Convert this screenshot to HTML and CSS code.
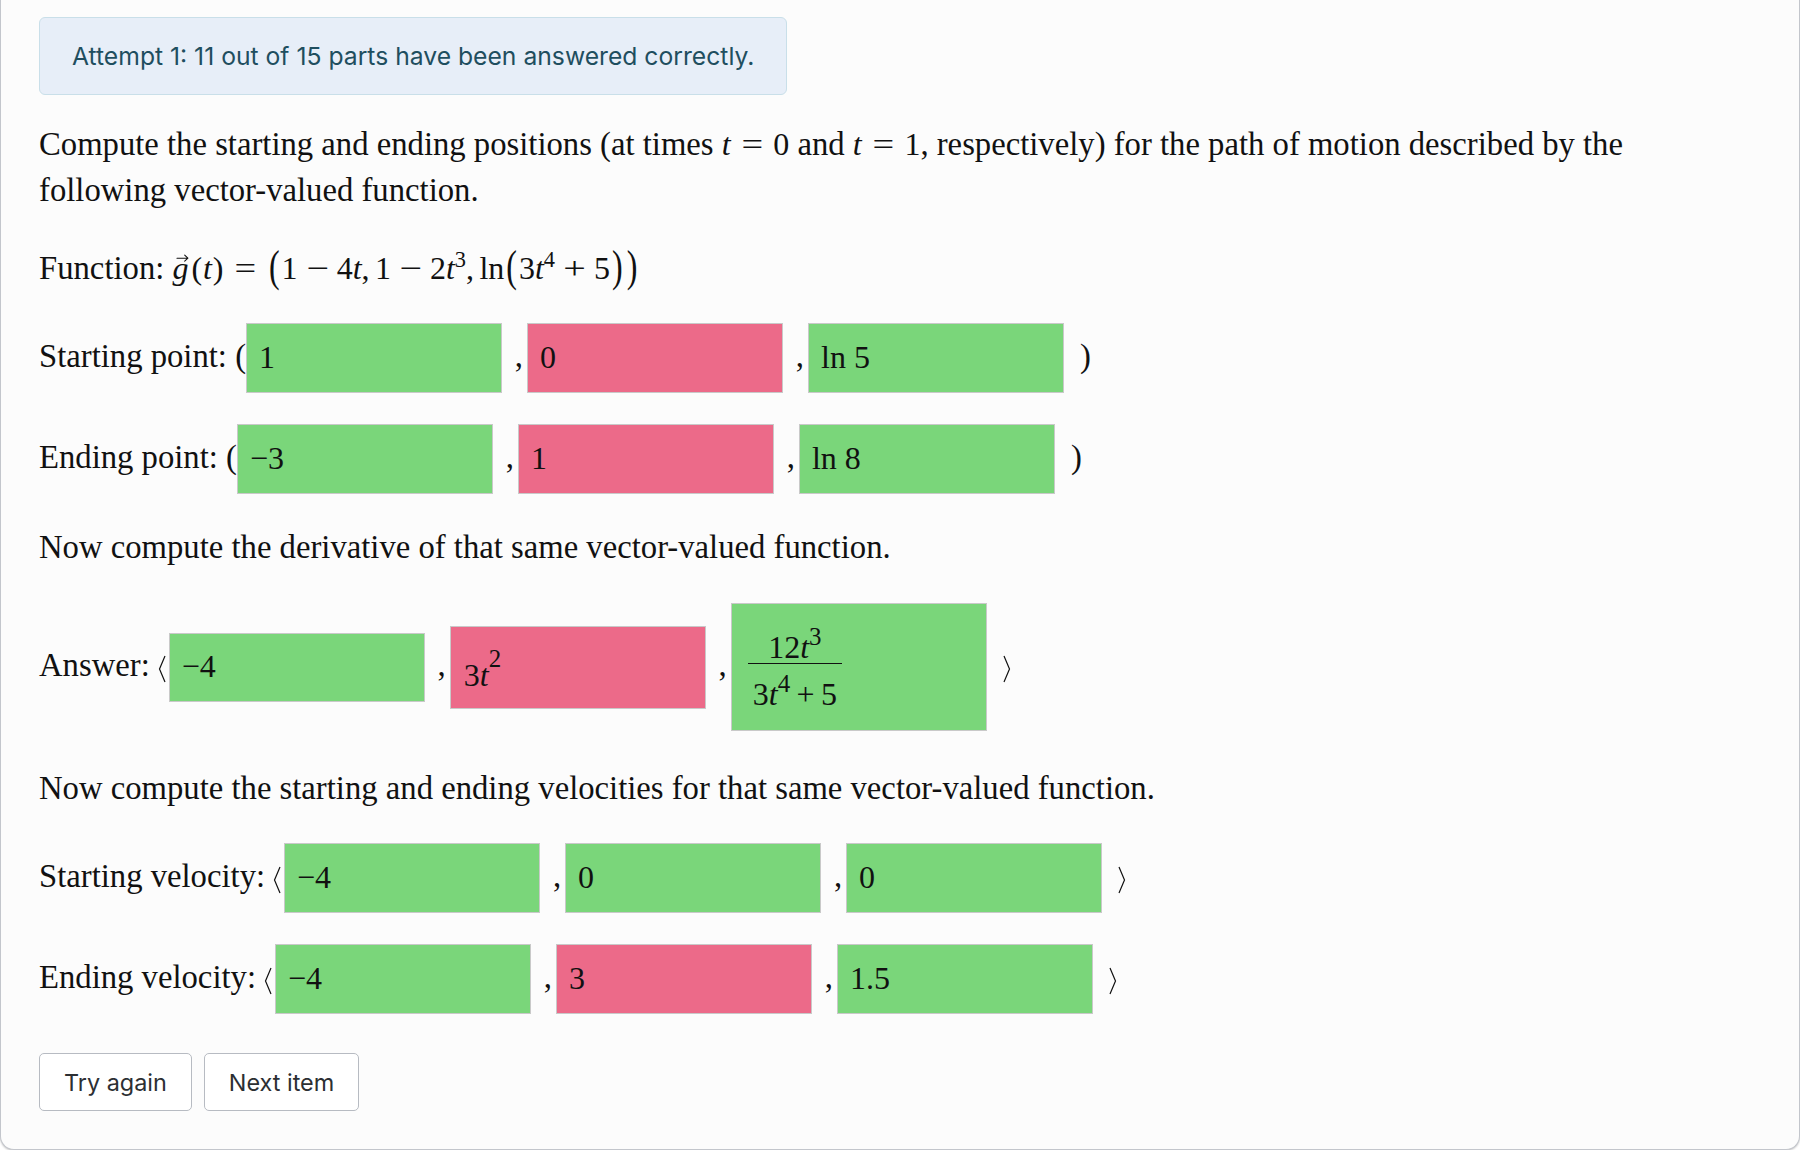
FILE: index.html
```html
<!DOCTYPE html>
<html lang="en">
<head>
<meta charset="utf-8">
<title>Vector-valued function: positions, derivative and velocities</title>
<link rel="stylesheet" href="styles.css">
</head>
<body>
<main class="card">
  <div class="alert">Attempt 1: 11 out of 15 parts have been answered correctly.</div>

  <p class="text lead"><span>Compute the starting and ending positions (at times </span><span class="math"><i>t</i><span class="rel">=</span>0</span><span> and </span><span class="math"><i>t</i><span class="rel">=</span>1</span><span>, respectively) for the path of motion described by the</span> <span>following vector-valued function.</span></p>

  <p class="text func">Function: <span class="math"><span class="vec"><i>g</i><svg class="vec-arrow" viewBox="0 0 12 8" aria-hidden="true"><path d="M0.5 4.2H11.2M8.2 1.2L11.4 4.2L8.2 7.2" fill="none" stroke="#111" stroke-width="1.1" stroke-linecap="round" stroke-linejoin="round"/></svg></span><span class="par">(</span><i>t</i><span class="par">)</span><span class="rel">=</span><span class="big">(</span>1<span class="bin">−</span>4<i>t</i>,<span class="thin"></span>1<span class="bin">−</span>2<i>t</i><sup class="msup">3</sup>,<span class="thin"></span>ln<span class="big">(</span>3<i>t</i><sup class="msup">4</sup><span class="bin">+</span>5<span class="big">)</span><span class="big">)</span></span></p>

  <div class="row">
    <span class="label">Starting point: (</span>
    <span class="field ok">1</span>
    <span class="sep">,</span>
    <span class="field bad">0</span>
    <span class="sep">,</span>
    <span class="field ok">ln 5</span>
    <span class="close">)</span>
  </div>

  <div class="row">
    <span class="label">Ending point: (</span>
    <span class="field ok">−3</span>
    <span class="sep">,</span>
    <span class="field bad">1</span>
    <span class="sep">,</span>
    <span class="field ok">ln 8</span>
    <span class="close">)</span>
  </div>

  <p class="text">Now compute the derivative of that same vector-valued function.</p>

  <div class="row row-tall">
    <span class="label">Answer:</span>
    <svg class="angle angle-open" viewBox="0 0 10 28" aria-hidden="true"><polyline points="8,1 2.5,14 8,27" fill="none" stroke="#111" stroke-width="1.2"/></svg>
    <span class="field ok field-short">−4</span>
    <span class="sep">,</span>
    <span class="field bad field-sup">3<i>t</i><sup class="fsup">2</sup></span>
    <span class="sep">,</span>
    <span class="field ok field-frac">
      <span class="frac">
        <span class="num">12<i>t</i><sup class="fsup">3</sup></span>
        <span class="den">3<i>t</i><sup class="fsup">4</sup><span class="fbin">+</span>5</span>
      </span>
    </span>
    <svg class="angle angle-close" viewBox="0 0 10 28" aria-hidden="true"><polyline points="2,1 7.5,14 2,27" fill="none" stroke="#111" stroke-width="1.2"/></svg>
  </div>

  <p class="text">Now compute the starting and ending velocities for that same vector-valued function.</p>

  <div class="row">
    <span class="label">Starting velocity:</span>
    <svg class="angle angle-open" viewBox="0 0 10 28" aria-hidden="true"><polyline points="8,1 2.5,14 8,27" fill="none" stroke="#111" stroke-width="1.2"/></svg>
    <span class="field ok">−4</span>
    <span class="sep">,</span>
    <span class="field ok">0</span>
    <span class="sep">,</span>
    <span class="field ok">0</span>
    <svg class="angle angle-close" viewBox="0 0 10 28" aria-hidden="true"><polyline points="2,1 7.5,14 2,27" fill="none" stroke="#111" stroke-width="1.2"/></svg>
  </div>

  <div class="row">
    <span class="label">Ending velocity:</span>
    <svg class="angle angle-open" viewBox="0 0 10 28" aria-hidden="true"><polyline points="8,1 2.5,14 8,27" fill="none" stroke="#111" stroke-width="1.2"/></svg>
    <span class="field ok">−4</span>
    <span class="sep">,</span>
    <span class="field bad">3</span>
    <span class="sep">,</span>
    <span class="field ok">1.5</span>
    <svg class="angle angle-close" viewBox="0 0 10 28" aria-hidden="true"><polyline points="2,1 7.5,14 2,27" fill="none" stroke="#111" stroke-width="1.2"/></svg>
  </div>

  <div class="actions">
    <button class="btn" type="button">Try again</button>
    <button class="btn" type="button">Next item</button>
  </div>
</main>
</body>
</html>
```

FILE: styles.css
```css
* {
  box-sizing: border-box;
}

html,
body {
  margin: 0;
  padding: 0;
  background: #ffffff;
}

body {
  font-family: "Liberation Serif", "Times New Roman", serif;
  color: #111111;
}

.card {
  height: 1150px;
  padding: 17px 38px 0;
  background: #fcfcfc;
  border: 1px solid #c3c6cc;
  border-top: 0;
  border-radius: 0 0 14px 14px;
  box-shadow: 0 1px 2px rgba(0, 0, 0, 0.22);
  font-size: 32.7px;
  line-height: 46px;
  overflow: hidden;
}

/* status banner */
.alert {
  width: fit-content;
  padding: 23px 32px;
  border: 1px solid #c9dfe9;
  border-radius: 6px;
  background: #e7eef8;
  color: #1f4e5f;
  font-family: Inter, "Noto Sans", sans-serif;
  font-size: 24.7px;
  line-height: 30px;
}

/* prose */
.text {
  margin: 0;
  max-width: 1700px;
}

.lead {
  margin-top: 26px;
}

.func {
  margin-top: 32px;
}

.row + .text {
  margin-top: 30px;
}

.row-tall + .text {
  margin-top: 34px;
}

/* inline math */
.math {
  font-size: 32px;
  white-space: nowrap;
}

.math i {
  font-style: italic;
}

.rel {
  display: inline-block;
  width: 0.778em;
  margin: 0 0.278em;
  text-align: center;
  transform: scaleX(1.2);
}

.bin {
  display: inline-block;
  width: 0.778em;
  margin: 0 0.222em;
  text-align: center;
  transform: scaleX(1.25);
}

.thin {
  display: inline-block;
  width: 0.167em;
}

.par {
  display: inline-block;
  width: 0.389em;
  text-align: center;
}

.big {
  display: inline-block;
  width: 0.458em;
  text-align: center;
  transform: scaleY(1.36);
  transform-origin: 50% 60%;
}

.msup {
  font-size: 0.7em;
  line-height: 0;
  vertical-align: 12px;
}

.vec {
  position: relative;
  display: inline-block;
  line-height: 31px;
  padding-right: 2px;
}

.vec-arrow {
  position: absolute;
  left: 4px;
  top: 1px;
  width: 13px;
  height: 8px;
}

/* answer rows */
.row {
  display: flex;
  align-items: center;
  margin-top: 32px;
}

.row + .row {
  margin-top: 31px;
}

.text + .row-tall {
  margin-top: 33px;
}

.label,
.sep,
.close {
  line-height: 46px;
  padding-bottom: 4px;
  white-space: pre;
}

.sep {
  width: 25px;
  flex: none;
  padding-right: 4px;
  text-align: right;
}

.close {
  margin-left: 16px;
}

.angle {
  flex: none;
  width: 10px;
  height: 28px;
  margin-top: 4px;
}

.angle-open {
  margin-left: 7px;
  margin-right: 2px;
}

.angle-close {
  margin-left: 15px;
}

.field {
  flex: none;
  display: flex;
  align-items: center;
  width: 256px;
  height: 70px;
  padding-left: 12px;
  padding-bottom: 3px;
  border: 1px solid #c9c9c9;
  font-size: 32px;
  line-height: 1;
  white-space: pre;
}

.field i {
  font-style: italic;
}

.ok {
  background: #7ad67a;
}

.bad {
  background: #ec6a89;
}

.field-short {
  height: 69px;
}

.field-sup {
  height: 83px;
  align-items: flex-start;
  padding-top: 32px;
  padding-left: 13px;
}

.field-frac {
  height: 128px;
  align-items: flex-start;
  padding-top: 27px;
  padding-left: 16px;
}

.fsup {
  font-size: 0.78em;
  line-height: 0;
  vertical-align: 13px;
}

.frac {
  display: inline-flex;
  flex-direction: column;
  text-align: center;
}

.num,
.den {
  padding: 0 5px;
  line-height: 32px;
}

.den {
  padding-top: 14px;
  border-top: 1px solid #111111;
}

.fbin {
  margin: 0 0.2em;
}

/* actions */
.actions {
  display: flex;
  gap: 12px;
  margin-top: 39px;
}

.btn {
  height: 58px;
  padding: 0 24px;
  border: 1px solid #b7bbc2;
  border-radius: 5px;
  background: #ffffff;
  color: #2c2f33;
  font-family: Inter, "Noto Sans", sans-serif;
  font-size: 23.4px;
}
```
